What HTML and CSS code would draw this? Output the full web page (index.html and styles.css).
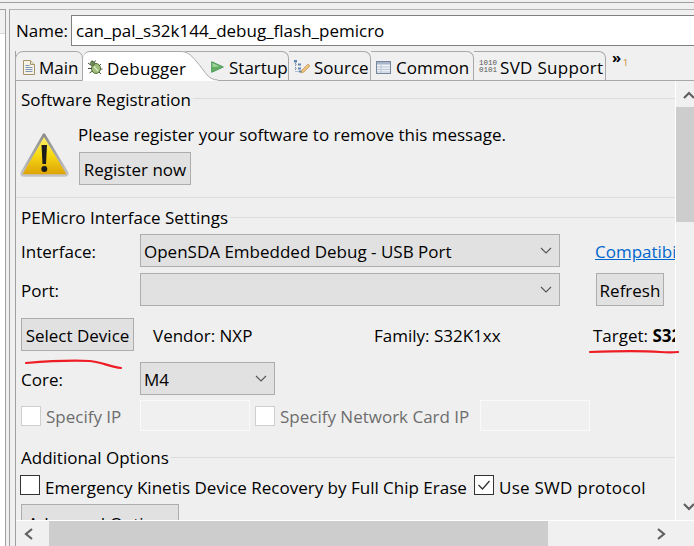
FILE: index.html
```html
<!DOCTYPE html>
<html lang="en">
<head>
<meta charset="utf-8">
<title>Debug Configurations</title>
<link rel="stylesheet" href="styles.css">
</head>
<body>
<div class="window">
  <div class="panes">
    <aside class="side"><div class="side-head"></div></aside>
    <main class="editor">
      <div class="name-row">
        <label class="name-label">Name:</label>
        <div class="name-input">can_pal_s32k144_debug_flash_pemicro</div>
      </div>
      <div class="folder">
        <nav class="tabs">
          <div class="tab tab-main">
            <svg class="ico" width="12" height="15" viewBox="0 0 12 15"><path d="M.5.5h7l4 4v10H.5z" fill="#f6f3e6" stroke="#a4946a"/><path d="M7.500.5v4h4" fill="#e6dfc4" stroke="#a4946a"/><path d="M2.500 5.500h4M2.500 7.500h7M2.500 9.500h7M2.500 11.500h7" stroke="#7d92b8"/></svg>
            <span>Main</span>
          </div>
          <div class="tab tab-debug">
            <svg class="tab-curve" width="38" height="30" viewBox="0 0 38 30"><path d="M0 0h1c8 0 12 6 18 13s9 16 19 16v1H0z" fill="#fff"/><path d="M0 .5h1c8 0 12 6 18 13s9 15.500 19 15.500" fill="none" stroke="#a8a8a8"/></svg>
            <svg class="ico ico-bug" width="16" height="15" viewBox="0 0 16 15"><ellipse cx="9" cy="8.500" rx="4.500" ry="5" fill="#9fbf78" stroke="#55703f"/><circle cx="5.500" cy="3.500" r="2.200" fill="#6f8f55" stroke="#3f5530" stroke-width=".7"/><path d="M1 3 3.500 5M5 .5 5.500 2M8.500.5 7.500 2.500M1 8.500h4M14 4l-2 2M15.500 9h-2.500M2.500 13 5.500 11M14 14l-2-2" stroke="#46503c"/><path d="M7 6.500 11 11" stroke="#dbe8c8" stroke-width="1.300"/></svg>
            <span class="tab-debug-label">Debugger</span>
          </div>
          <div class="tab tab-start">
            <svg class="ico" width="13" height="12" viewBox="0 0 13 12"><path d="M.7.700 12.300 6 .7 11.300z" fill="#62ae62" stroke="#4d9a58"/><path d="M1.500 2v4l7-.5z" fill="#9fd49a"/></svg>
            <span>Startup</span>
          </div>
          <div class="tab tab-src">
            <svg class="ico" width="16" height="15" viewBox="0 0 16 15"><path d="M1.500 1v10M1.500 4.500h2M1.500 8.500h2M1.500 11.500h3" stroke="#7b8fa8" stroke-dasharray="1 1"/><path d="M0 0h3v2.500H0zM4 3.500h3v2H4zM4 7.500h3v2H4zM5 10.500h3v2H5z" fill="#5f86b3"/><path d="m7 13 1-3 6-6 2 2-6 6z" fill="#eec27c" stroke="#bd9356" stroke-width=".7"/></svg>
            <span>Source</span>
          </div>
          <div class="tab tab-com">
            <svg class="ico" width="15" height="13" viewBox="0 0 15 13"><rect x=".5" y=".5" width="14" height="12" fill="#eef1f6" stroke="#75869f"/><path d="M1 1h13v2.500H1z" fill="#a9b6c9"/><path d="M1 6h13M1 8.500h13M1 11h13M5 4v8" stroke="#bcc6d4"/></svg>
            <span>Common</span>
          </div>
          <div class="tab tab-svd">
            <span class="bits">1010<br>0101</span>
            <span class="svd-label">SVD Support</span>
          </div>
          <div class="more"><span class="more-arrows">»</span><span class="more-count">1</span></div>
        </nav>
        <div class="folder-body">
          <div class="form">
            <div class="legend legend-first"><span>Software Registration</span><i></i></div>
            <section class="reg">
              <svg class="warn" width="50" height="46" viewBox="0 0 50 46">
                <defs>
                  <linearGradient id="wg" x1="0" y1="0" x2="0" y2="1"><stop offset="0" stop-color="#fff176"/><stop offset=".5" stop-color="#f7d911"/><stop offset="1" stop-color="#dc9f07"/></linearGradient>
                  <linearGradient id="wr" x1="0" y1="0" x2="0" y2="1"><stop offset="0" stop-color="#8d8d8d"/><stop offset="1" stop-color="#c4c4c4"/></linearGradient>
                </defs>
                <path d="M24 2.500 47 40.500c1 2-.2 3-2 3H4c-2 0-3-1-2-3z" fill="url(#wg)" stroke="url(#wr)" stroke-width="2.500" stroke-linejoin="round"/>
                <path d="M21.500 13h5.500l-1 19h-3.500z" fill="#1c1c1c"/>
                <circle cx="24.300" cy="37" r="3" fill="#1c1c1c"/>
              </svg>
              <div class="reg-text">
                <p class="reg-msg">Please register your software to remove this message.</p>
                <button class="btn btn-reg" type="button">Register now</button>
              </div>
            </section>
            <hr class="sep">
            <div class="legend legend-pe"><span>PEMicro Interface Settings</span><i></i></div>
            <div class="row row-iface">
              <label class="lbl">Interface:</label>
              <div class="combo combo-wide"><span>OpenSDA Embedded Debug - USB Port</span><svg width="12" height="7" viewBox="0 0 12 7"><path d="m1 1 5 5 5-5" fill="none" stroke="#555" stroke-width="1.100"/></svg></div>
              <a class="link" href="#">Compatibility</a>
            </div>
            <div class="row row-port">
              <label class="lbl">Port:</label>
              <div class="combo combo-wide"><span></span><svg width="12" height="7" viewBox="0 0 12 7"><path d="m1 1 5 5 5-5" fill="none" stroke="#555" stroke-width="1.100"/></svg></div>
              <button class="btn btn-refresh" type="button">Refresh</button>
            </div>
            <div class="row row-device">
              <button class="btn btn-select" type="button">Select Device</button>
              <span>Vendor: NXP</span>
              <span>Family: S32K1xx</span>
              <span class="target">Target: <b>S32K144</b></span>
            </div>
            <div class="row row-core">
              <label class="lbl">Core:</label>
              <div class="combo combo-core"><span>M4</span><svg width="12" height="7" viewBox="0 0 12 7"><path d="m1 1 5 5 5-5" fill="none" stroke="#555" stroke-width="1.100"/></svg></div>
            </div>
            <div class="row row-ip">
              <span class="check check-off"></span>
              <span class="muted">Specify IP</span>
              <div class="field"></div>
              <span class="check check-off"></span>
              <span class="muted">Specify Network Card IP</span>
              <div class="field"></div>
            </div>
            <div class="legend legend-add"><span>Additional Options</span><i></i></div>
            <div class="row row-opts">
              <span class="check"></span>
              <span class="opt-one">Emergency Kinetis Device Recovery by Full Chip Erase</span>
              <span class="check"><svg width="18" height="18" viewBox="0 0 18 18"><path d="m3.500 9 4 4 7-8" fill="none" stroke="#333" stroke-width="1.300"/></svg></span>
              <span class="opt-two">Use SWD protocol</span>
            </div>
            <button class="btn btn-adv" type="button">Advanced Options</button>
          </div>
          <div class="vbar">
            <svg class="v-up" width="12" height="8" viewBox="0 0 12 8"><path d="m1 7 5-5 5 5" fill="none" stroke="#606060" stroke-width="2.200"/></svg>
            <div class="v-thumb"></div>
            <svg class="v-down" width="12" height="8" viewBox="0 0 12 8"><path d="m1 1 5 5 5-5" fill="none" stroke="#606060" stroke-width="2.200"/></svg>
          </div>
        </div>
        <div class="hbar">
          <svg class="h-left" width="9" height="12" viewBox="0 0 9 12"><path d="M8 1 2 6l6 5" fill="none" stroke="#606060" stroke-width="2.200"/></svg>
          <div class="h-thumb"></div>
          <svg class="h-right" width="9" height="12" viewBox="0 0 9 12"><path d="m1 1 6 5-6 5" fill="none" stroke="#606060" stroke-width="2.200"/></svg>
        </div>
      </div>
    </main>
  </div>
  <svg class="ink" width="694" height="546" viewBox="0 0 694 546">
    <path d="M26 363C50 361 70 360 90 361c12 1 20 6 31 7" fill="none" stroke="#ee1c25" stroke-width="2.200" stroke-linecap="round"/>
    <path d="M590 352c30-1 55-1 70 0 7 .5 13 .5 18 0" fill="none" stroke="#ee1c25" stroke-width="2.200" stroke-linecap="round"/>
  </svg>
</div>
</body>
</html>
```
FILE: styles.css
```css
* { box-sizing: border-box; }
html, body { margin: 0; padding: 0; }
body {
  width: 694px;
  height: 546px;
  overflow: hidden;
  background: #f0f0f0;
  color: #000;
  font-family: "Open Sans", "Noto Sans", sans-serif;
  font-size: 17px;
  line-height: 22px;
}
.window { position: relative; width: 694px; height: 546px; padding-top: 2px; }
.panes {
  display: flex;
  height: 544px;
  border-top: 1px solid #a0a0a0;
  padding-top: 6px;
  gap: 3px;
}
.side { width: 6px; border-right: 1px solid #a0a0a0; border-top: 1px solid #a0a0a0; background: #fff; flex: none; }
.side-head { height: 24px; background: #f0f0f0; border-bottom: 1px solid #d9d9d9; }
.editor {
  flex: 1;
  min-width: 0;
  border-left: 1px solid #a0a0a0;
  border-top: 1px solid #b4b4b4;
  padding: 5px 0 0 5px;
  display: flex;
  flex-direction: column;
}
.name-row { display: flex; align-items: center; height: 31px; }
.name-label { width: 56px; flex: none; padding-left: 1px; }
.name-input {
  flex: none;
  width: 640px;
  height: 31px;
  line-height: 29px;
  background: #fff;
  border: 1px solid #808080;
  padding-left: 4px;
  white-space: nowrap;
}
.folder { flex: 1; min-height: 0; margin-top: 5px; display: flex; flex-direction: column; border-left: 1px solid #a0a0a0; }

/* tabs */
.tabs { display: flex; height: 30px; flex: none; margin-left: -1px; }
.tab {
  position: relative;
  display: flex;
  align-items: center;
  height: 30px;
  flex: none;
  border-top: 1px solid #a8a8a8;
  border-right: 1px solid #a8a8a8;
  border-bottom: 1px solid #a8a8a8;
  border-top-right-radius: 7px;
  padding-top: 2px;
  white-space: nowrap;
}
.tab > span:not(.bits) { padding-top: 2px; }
.ico, .bits { flex: none; }
.tab-main { width: 68px; padding-left: 7px; gap: 4px; border-left: 1px solid #a8a8a8; border-top-left-radius: 8px; }
.tab-debug { width: 97px; padding-left: 4px; gap: 4px; background: #fff; border-right: 0; border-bottom: 0; border-top-right-radius: 0; border-top-left-radius: 7px; z-index: 2; }
.tab-curve { position: absolute; left: 97px; top: -1px; }
.ico-bug, .tab-debug-label { position: relative; z-index: 1; }
.tab-debug-label { letter-spacing: .2px; }
.tab-start { width: 109px; padding-left: 31px; gap: 5px; }
.tab-src { width: 82px; padding-left: 5px; gap: 4px; }
.tab-com { width: 103px; padding-left: 5px; gap: 5px; }
.tab-svd { width: 132px; padding-left: 5px; gap: 3px; }
.svd-label { letter-spacing: .3px; }
.bits { font-family: "Liberation Mono", monospace; font-size: 7.500px; line-height: 7px; color: #555; }
.more { flex: 1; border-bottom: 1px solid #a8a8a8; position: relative; }
.more-arrows { position: absolute; left: 6px; top: -5px; font-size: 15px; font-weight: 700; line-height: 22px; }
.more-count { position: absolute; left: 17px; top: 6px; font-size: 9px; line-height: 12px; color: #c5822a; }

/* body of the folder */
.folder-body { flex: none; display: flex; height: 440px; border-bottom: 1px solid #fff; }
.form { width: 660px; flex: none; height: 439px; overflow: hidden; background: #efefef; border-right: 1px solid #fff; display: flex; flex-direction: column; align-items: flex-start; padding-left: 5px; }
.legend { display: flex; align-items: center; align-self: stretch; height: 22px; flex: none; gap: 2px; }
.legend i { flex: 1; height: 1px; background: #dcdcdc; margin-top: -2px; }
.legend-first { margin-top: 7px; }
.legend-first span { padding-top: 2px; }
.reg { display: flex; align-items: flex-start; align-self: stretch; height: 61px; margin-top: 14px; flex: none; }
.warn { margin-top: 8px; margin-left: -1px; flex: none; }
.reg-text { margin-left: 8px; }
.reg-msg { margin: 0; height: 22px; white-space: nowrap; }
.sep { align-self: stretch; margin: 12px 0 0 -5px; height: 1px; border: 0; background: #dcdcdc; flex: none; }
.legend-pe { margin-top: 9px; }
.btn {
  font: inherit;
  color: #000;
  height: 33px;
  padding: 2px 0 0;
  background: #e1e1e1;
  border: 1px solid #adadad;
  white-space: nowrap;
  flex: none;
}
.btn-reg { margin: 6px 0 0 1px; width: 112px; display: block; }
.row { display: flex; align-items: center; flex: none; height: 33px; white-space: nowrap; }
.row > span:not(.check), .lbl, .link, .combo > span { padding-top: 2px; }
.lbl { width: 119px; flex: none; }
.combo {
  display: flex;
  align-items: center;
  justify-content: space-between;
  height: 33px;
  background: #e1e1e1;
  border: 1px solid #adadad;
  padding: 0 7px 0 3px;
  flex: none;
}
.combo-wide { width: 420px; }
.combo-core { width: 135px; }
.row-iface { margin-top: 5px; }
.link { margin-left: 35px; color: #0066cc; text-decoration: underline; }
.row-port { margin-top: 6px; }
.btn-refresh { width: 68px; margin-left: 36px; }
.row-device { margin-top: 12px; display: grid; grid-template-columns: 132px 221px 219px auto; }
.btn-select { width: 113px; }
.row-core { margin-top: 11px; }
.row-ip { margin-top: 5px; height: 31px; }
.check {
  width: 20px;
  height: 20px;
  flex: none;
  background: #fff;
  border: 1px solid #333;
  display: flex;
  align-items: center;
  justify-content: center;
}
.check-off { border-color: #cfcfcf; }
.muted { color: #6d6d6d; margin-left: 5px; }
.row-ip .muted:nth-child(2) { width: 94px; flex: none; }
.row-ip .muted:nth-child(5) { width: 200px; flex: none; }
.field { width: 110px; height: 31px; flex: none; background: #f0f0f0; border: 1px solid #fafafa; }
.row-ip .field:nth-child(3) { margin-right: 5px; }
.legend-add { margin-top: 16px; }
.row-opts { margin-top: 6px; height: 22px; margin-left: -1px; align-items: flex-start; }
.row-opts > span:not(.check) { padding-top: 0; margin-top: 2px; }
.opt-one { margin-left: 5px; width: 429px; flex: none; }
.opt-two { margin-left: 5px; letter-spacing: .25px; }
.btn-adv { width: 158px; margin-top: 7px; padding-top: 6px; }

/* scrollbars */
.vbar { flex: none; width: 18px; height: 439px; position: relative; overflow: hidden; }
.v-up { position: absolute; left: 7px; top: 10px; }
.v-thumb { position: absolute; left: 0; top: 26px; width: 18px; height: 115px; background: #cdcdcd; }
.v-down { position: absolute; left: 7px; top: 422px; }
.hbar { flex: none; height: 25px; position: relative; }
.h-left { position: absolute; left: 8px; top: 7px; }
.h-thumb { position: absolute; left: 33px; top: 0; width: 499px; height: 25px; background: #cdcdcd; }
.h-right { position: absolute; left: 641px; top: 7px; }

/* hand-drawn red annotation */
.ink { position: absolute; left: 0; top: 0; pointer-events: none; }
```
